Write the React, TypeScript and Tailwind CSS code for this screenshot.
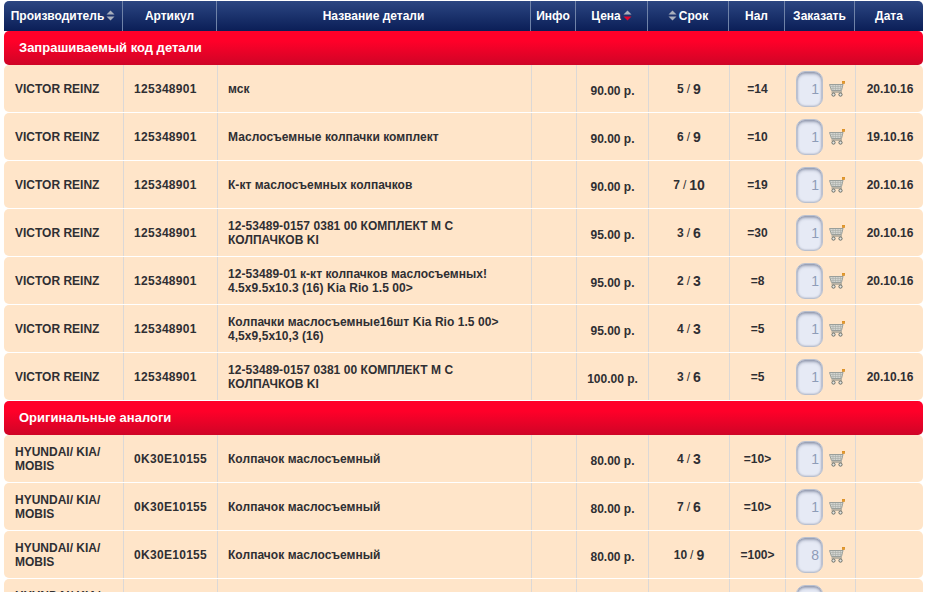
import React from 'react';

const COLS = 'grid grid-cols-[120px_94px_314px_45px_72px_81px_56px_70px_67px]';
const HEAD_COLS = 'grid grid-cols-[119px_94px_314px_45px_72px_81px_56px_70px_68px]';

interface Row {
  brand: string;
  code: string;
  name: string;
  price: string;
  a: string;
  b: string;
  stock: string;
  qty?: string;
  date?: string;
}

const V = 'VICTOR REINZ';
const H = 'HYUNDAI/ KIA/ MOBIS';

const asked: Row[] = [
  { brand: V, code: '125348901', name: 'мск', price: '90.00 р.', a: '5', b: '9', stock: '=14', date: '20.10.16' },
  { brand: V, code: '125348901', name: 'Маслосъемные колпачки комплект', price: '90.00 р.', a: '6', b: '9', stock: '=10', date: '19.10.16' },
  { brand: V, code: '125348901', name: 'К-кт маслосъемных колпачков', price: '90.00 р.', a: '7', b: '10', stock: '=19', date: '20.10.16' },
  { brand: V, code: '125348901', name: '12-53489-0157 0381 00 КОМПЛЕКТ М С КОЛПАЧКОВ KI', price: '95.00 р.', a: '3', b: '6', stock: '=30', date: '20.10.16' },
  { brand: V, code: '125348901', name: '12-53489-01 к-кт колпачков маслосъемных! 4.5x9.5x10.3 (16) Kia Rio 1.5 00>', price: '95.00 р.', a: '2', b: '3', stock: '=8', date: '20.10.16' },
  { brand: V, code: '125348901', name: 'Колпачки маслосъемные16шт Kia Rio 1.5 00> 4,5x9,5x10,3 (16)', price: '95.00 р.', a: '4', b: '3', stock: '=5' },
  { brand: V, code: '125348901', name: '12-53489-0157 0381 00 КОМПЛЕКТ М С КОЛПАЧКОВ KI', price: '100.00 р.', a: '3', b: '6', stock: '=5', date: '20.10.16' },
];

const analogs: Row[] = [
  { brand: H, code: '0K30E10155', name: 'Колпачок маслосъемный', price: '80.00 р.', a: '4', b: '3', stock: '=10>' },
  { brand: H, code: '0K30E10155', name: 'Колпачок маслосъемный', price: '80.00 р.', a: '7', b: '6', stock: '=10>' },
  { brand: H, code: '0K30E10155', name: 'Колпачок маслосъемный', price: '80.00 р.', a: '10', b: '9', stock: '=100>', qty: '8' },
  { brand: H, code: '0K30E10155', name: 'Колпачок маслосъемный', price: '80.00 р.', a: '4', b: '3', stock: '=10>' },
];

function SortArrows({ down }: { down?: boolean }) {
  return (
    <svg width="9" height="11" viewBox="0 0 9 11" className="shrink-0">
      <path d="M4.5 0.5 L8.5 4.5 L0.5 4.5 Z" fill="#a9b0bd" />
      <path d="M4.5 10.5 L8.5 6.5 L0.5 6.5 Z" fill={down ? '#e3062b' : '#a9b0bd'} />
    </svg>
  );
}

function Cart() {
  return (
    <svg width="16" height="16" viewBox="0 0 16 16" className="shrink-0">
      <path d="M0.5 3.5 H14 L12.5 9.5 H2.5 Z" fill="#d3d5d1" stroke="#9a9f9b" strokeWidth="1" />
      <path d="M1.5 5.5 H13.5 M2 7.5 H13 M4 4 V9 M6.5 4 V9 M9 4 V9 M11.5 4 V9" stroke="#a8aca8" strokeWidth="0.6" />
      <path d="M2.5 11 H13" fill="none" stroke="#8d928e" strokeWidth="1.2" />
      <circle cx="4.5" cy="13.6" r="1.6" fill="#e6e6e2" stroke="#666c66" strokeWidth="1" />
      <circle cx="11.5" cy="13.6" r="1.6" fill="#e6e6e2" stroke="#666c66" strokeWidth="1" />
      <path d="M14 3.5 V2" stroke="#9a9f9b" strokeWidth="0.8" />
      <rect x="13.2" y="0" width="2.6" height="2.6" fill="#eb9c2a" stroke="#c47d18" strokeWidth="0.4" />
    </svg>
  );
}

function Head({ children, className = '' }: { children: React.ReactNode; className?: string }) {
  return (
    <div className={`flex items-center justify-center gap-[2px] border-r border-[#6f82a8] last:border-r-0 text-[12px] font-bold text-white pb-[1px] ${className}`}>
      {children}
    </div>
  );
}

function Section({ title }: { title: string }) {
  return (
    <div className="h-[34px] rounded-[5px] bg-gradient-to-b from-[#ff0029] from-30% to-[#cf0426] pl-[15px] flex items-center text-[13px] font-bold text-white">
      {title}
    </div>
  );
}

function Cell({ children, className = '' }: { children?: React.ReactNode; className?: string }) {
  return <div className={`flex items-center border-r border-[#dcd8d6] last:border-r-0 ${className}`}>{children}</div>;
}

function ItemRow({ row }: { row: Row }) {
  return (
    <div className={`${COLS} h-[47px] mb-px rounded-[5px] bg-[#ffe5c9] text-[12px] font-bold leading-[14px] text-[#2f2f33]`}>
      <Cell className="pl-[11px] pr-1">{row.brand}</Cell>
      <Cell className="pl-[10px] tracking-[0.3px]">{row.code}</Cell>
      <Cell className="pl-[10px] pr-8 tracking-[0.05px]">{row.name}</Cell>
      <Cell />
      <Cell className="justify-center pt-[5px]">{row.price}</Cell>
      <Cell className="justify-center gap-[3px]">
        <span>{row.a}</span>
        <span className="font-normal">/</span>
        <span className="text-[14px]">{row.b}</span>
      </Cell>
      <Cell className="justify-center font-bold">{row.stock}</Cell>
      <Cell className="pl-[10px] gap-[6px]">
        <div className="w-[27px] h-[36px] rounded-[9px] border border-[#b9c0cf] bg-[#e6eaf5] flex items-center justify-end pr-[3px] text-[14px] font-normal text-[#8e9cb8] shadow-[inset_0_2px_3px_rgba(80,90,120,0.5),inset_0_0_2px_rgba(80,90,120,0.4)]">
          {row.qty ?? '1'}
        </div>
        <Cart />
      </Cell>
      <Cell className="justify-center pl-px">{row.date}</Cell>
    </div>
  );
}

export default function App() {
  return (
    <div className="h-[592px] w-[926px] overflow-hidden bg-white pl-1 pt-px font-['Liberation_Sans',Arial,sans-serif]">
      <div className="w-[919px]">
        <div className={`${HEAD_COLS} h-[30px] rounded-t-[5px] bg-gradient-to-b from-[#2c4682] to-[#0b1e57]`}>
          <Head>Производитель <SortArrows /></Head>
          <Head>Артикул</Head>
          <Head>Название детали</Head>
          <Head>Инфо</Head>
          <Head>Цена <SortArrows down /></Head>
          <Head><SortArrows /> Срок</Head>
          <Head>Нал</Head>
          <Head>Заказать</Head>
          <Head>Дата</Head>
        </div>
        <Section title="Запрашиваемый код детали" />
        {asked.map((r, i) => <ItemRow key={i} row={r} />)}
        <Section title="Оригинальные аналоги" />
        {analogs.map((r, i) => <ItemRow key={i} row={r} />)}
      </div>
    </div>
  );
}
